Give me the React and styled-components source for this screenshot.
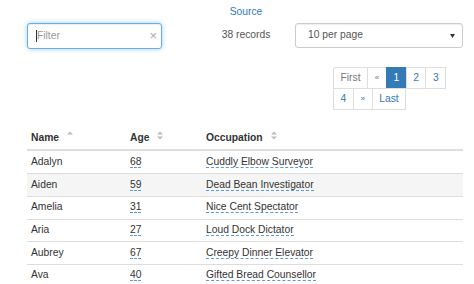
import styled, { createGlobalStyle } from "styled-components";

const GlobalStyle = createGlobalStyle`
  html, body {
    margin: 0;
    padding: 0;
    background: #fff;
  }
  body {
    font-family: "Liberation Sans", Arial, sans-serif;
    font-size: 10.3px;
    line-height: 1.42857;
    color: #333;
  }
`;

const rows = [
  { name: "Adalyn", age: 68, job: "Cuddly Elbow Surveyor" },
  { name: "Aiden", age: 59, job: "Dead Bean Investigator" },
  { name: "Amelia", age: 31, job: "Nice Cent Spectator" },
  { name: "Aria", age: 27, job: "Loud Dock Dictator" },
  { name: "Aubrey", age: 67, job: "Creepy Dinner Elevator" },
  { name: "Ava", age: 40, job: "Gifted Bread Counsellor" },
];

const pages = [
  { label: "First", disabled: true },
  { label: "«", disabled: true, small: true },
  { label: "1", active: true },
  { label: "2" },
  { label: "3" },
  { label: "4" },
  { label: "»", small: true },
  { label: "Last" },
];

const SortIcon = ({ both }) => (
  <SortSvg width="6" height="9" viewBox="0 0 6 9">
    <path d="M0 3.5 L3 0.5 L6 3.5 Z" fill="#bbb" />
    {both && <path d="M0 5.5 L3 8.5 L6 5.5 Z" fill="#bbb" />}
  </SortSvg>
);

export default function App() {
  return (
    <>
      <GlobalStyle />
      <Page>
        <TopGrid>
          <Spacer />
          <Middle>
            <SourceLink href="#">Source</SourceLink>
          </Middle>
          <Spacer />
          <FilterWrap>
            <FilterInput placeholder="Filter" />
            <Caret />
            <Clear>×</Clear>
          </FilterWrap>
          <Middle>
            <Records>38 records</Records>
          </Middle>
          <Select>
            <span>10 per page</span>
            <svg width="5" height="4" viewBox="0 0 5 4">
              <path d="M0 0 L5 0 L2.5 4 Z" fill="#333" />
            </svg>
          </Select>
        </TopGrid>

        <Pagination>
          {pages.map((p) => (
            <PageItem
              key={p.label}
              $active={p.active}
              $disabled={p.disabled}
              $small={p.small}
            >
              {p.label}
            </PageItem>
          ))}
        </Pagination>

        <Table>
          <colgroup>
            <col style={{ width: 99 }} />
            <col style={{ width: 76 }} />
            <col />
          </colgroup>
          <thead>
            <tr>
              <Th>
                Name <SortIcon />
              </Th>
              <Th>
                Age <SortIcon both />
              </Th>
              <Th>
                Occupation <SortIcon both />
              </Th>
            </tr>
          </thead>
          <tbody>
            {rows.map((r, i) => (
              <Row key={r.name} $shade={i === 1}>
                <Td>{r.name}</Td>
                <Td>
                  <Editable>{r.age}</Editable>
                </Td>
                <Td>
                  <Editable>{r.job}</Editable>
                </Td>
              </Row>
            ))}
          </tbody>
        </Table>
      </Page>
    </>
  );
}

const Page = styled.div`
  padding: 5px 11px 0 27px;
`;

const TopGrid = styled.div`
  display: grid;
  grid-template-columns: 135px 1fr 168px;
  row-gap: 3px;
  align-items: center;
`;

const Spacer = styled.div``;

const Middle = styled.div`
  text-align: center;
  padding-left: 35px;
`;

const SourceLink = styled.a`
  color: #337ab7;
  text-decoration: none;
`;

const Records = styled.span`
  color: #555;
`;

const FilterWrap = styled.div`
  position: relative;
  height: 26px;
`;

const FilterInput = styled.input`
  box-sizing: border-box;
  width: 100%;
  height: 26px;
  padding: 0 20px 0 9px;
  border: 1px solid #66afe9;
  border-radius: 3px;
  box-shadow: inset 0 1px 1px rgba(0, 0, 0, 0.075),
    0 0 5px rgba(102, 175, 233, 0.6);
  font-family: inherit;
  font-size: 10.3px;
  color: #555;
  outline: none;
  &::placeholder {
    color: #999;
  }
`;

const Caret = styled.span`
  position: absolute;
  left: 9px;
  top: 7px;
  width: 1px;
  height: 12px;
  background: #333;
`;

const Clear = styled.span`
  position: absolute;
  right: 5px;
  top: 6px;
  font-size: 13px;
  line-height: 14px;
  color: #aaa;
`;

const Select = styled.div`
  box-sizing: border-box;
  height: 25px;
  display: flex;
  align-items: center;
  justify-content: space-between;
  padding: 0 7px 0 12px;
  border: 1px solid #ccc;
  border-radius: 3px;
  box-shadow: inset 0 1px 1px rgba(0, 0, 0, 0.075);
  color: #555;
`;

const Pagination = styled.div`
  display: flex;
  flex-wrap: wrap;
  margin: 18px 0 0 307px;
  width: 130px;
`;

const PageItem = styled.span`
  box-sizing: border-box;
  height: 22px;
  line-height: 20px;
  padding: 0 6.5px;
  margin: 0 0 -1px -1px;
  border: 1px solid ${(p) => (p.$active ? "#337ab7" : "#ddd")};
  background: ${(p) => (p.$active ? "#337ab7" : "#fff")};
  color: ${(p) => (p.$active ? "#fff" : p.$disabled ? "#777" : "#337ab7")};
  font-size: ${(p) => (p.$small ? "8px" : "10.3px")};
  min-width: 20px;
  text-align: center;
  &:first-child {
    border-top-left-radius: 3px;
  }
`;

const Table = styled.table`
  width: 100%;
  margin-top: 16px;
  border-collapse: collapse;
  table-layout: fixed;
`;

const Th = styled.th`
  text-align: left;
  font-weight: bold;
  padding: 6px 4px 4px;
  border-bottom: 2px solid #ddd;
  white-space: nowrap;
`;

const SortSvg = styled.svg`
  margin-left: 5px;
  vertical-align: 1px;
`;

const Row = styled.tr`
  background: ${(p) => (p.$shade ? "#f5f5f5" : "#fff")};
`;

const Td = styled.td`
  padding: 3.5px 4px;
  border-top: 1px solid #ddd;
  white-space: nowrap;
`;

const Editable = styled.span`
  color: #333;
  border-bottom: 1px dashed #5b9bd5;
`;
